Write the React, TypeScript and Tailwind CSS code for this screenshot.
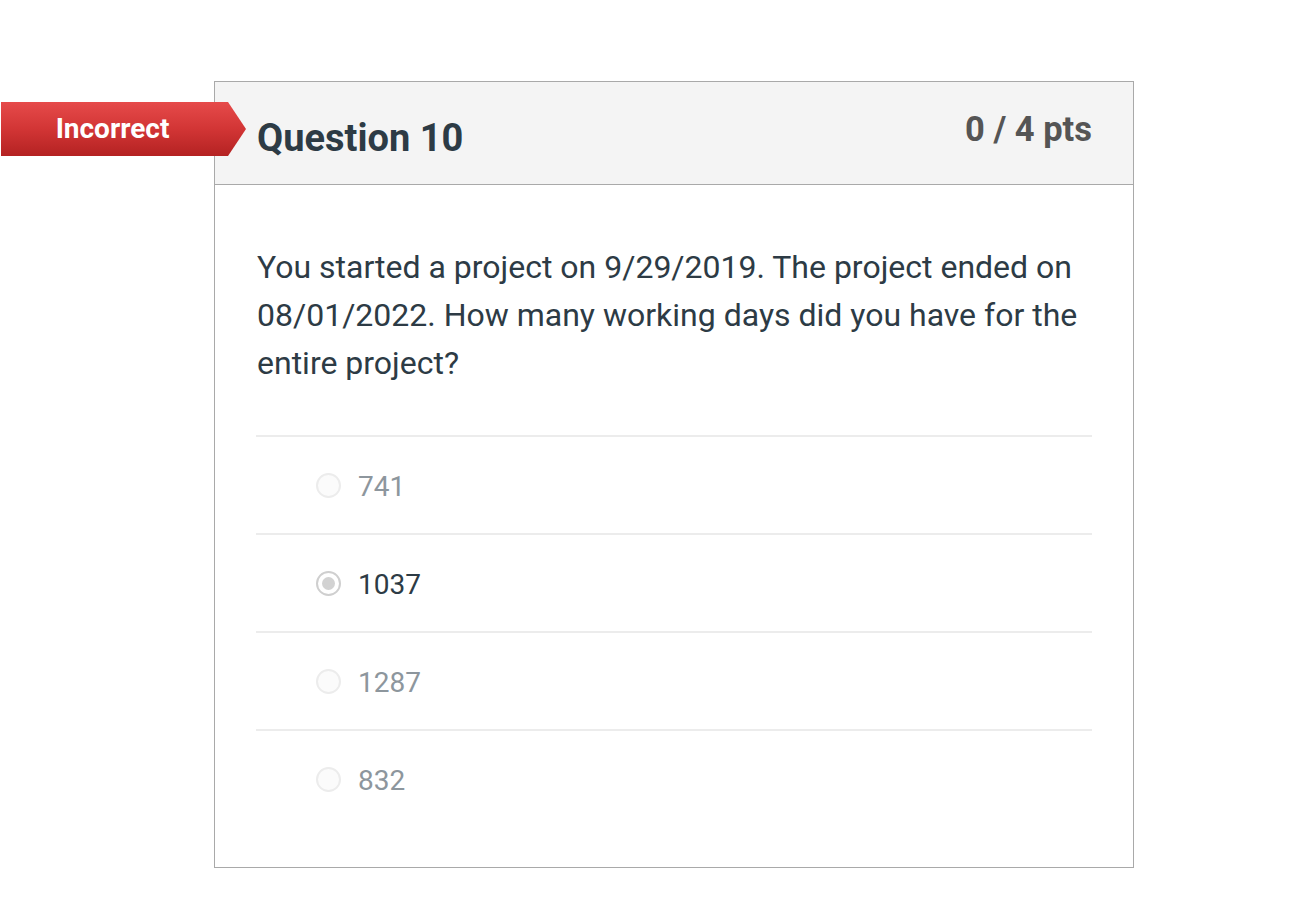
import React from "react";

const answers = [
  { label: "741", selected: false },
  { label: "1037", selected: true },
  { label: "1287", selected: false },
  { label: "832", selected: false },
];

function Radio({ selected }: { selected: boolean }) {
  if (selected) {
    return (
      <span className="flex h-[25px] w-[25px] shrink-0 items-center justify-center rounded-full border-2 border-[#cfcfcf] bg-white">
        <span className="h-[13px] w-[13px] rounded-full bg-[#d2d2d2]" />
      </span>
    );
  }
  return <span className="h-[25px] w-[25px] shrink-0 rounded-full border-2 border-[#ececec] bg-[#fbfbfb]" />;
}

export default function App() {
  return (
    <div className="min-h-screen bg-white pl-[214px] pt-[81px] font-['Roboto',sans-serif] text-[#2d3b45]">
      <div className="relative w-[920px] border border-[#a9a9a9]">
        <div className="absolute left-[-214px] top-[20px] flex h-[54px] w-[245px] items-center bg-gradient-to-b from-[#e64a4a] via-[#d23535] to-[#b42222] [clip-path:polygon(0_0,227px_0,245px_50%,227px_100%,0_100%)]">
          <span className="w-[223px] text-center text-[28px] font-bold leading-none text-white">Incorrect</span>
        </div>
        <div className="flex h-[103px] items-start justify-between border-b border-[#a9a9a9] bg-[#f4f4f4] px-[41px] pt-[30px]">
          <h2 className="mt-[7px] pl-[1px] text-[38px] font-bold leading-none text-[#2d3b45]">Question 10</h2>
          <div className="text-[34.5px] font-bold leading-none text-[#555555]">0 / 4 pts</div>
        </div>
        <div className="px-[41px] pb-[40px] pt-[58px]">
          <p className="pl-[1px] text-[32px] leading-[48px] text-[#2d3b45]">
            You started a project on 9/29/2019. The project ended on 08/01/2022. How many working days did you have for the entire project?
          </p>
          <div className="mt-[48px]">
            {answers.map((a) => (
              <div
                key={a.label}
                className="flex h-[98px] items-center border-t-2 border-[#ececec] pl-[60px]"
              >
                <Radio selected={a.selected} />
                <span
                  className={`ml-[17px] mt-[3px] text-[28px] leading-none ${a.selected ? "text-[#2d3b45]" : "text-[#8d969d]"}`}
                >
                  {a.label}
                </span>
              </div>
            ))}
          </div>
        </div>
      </div>
    </div>
  );
}
